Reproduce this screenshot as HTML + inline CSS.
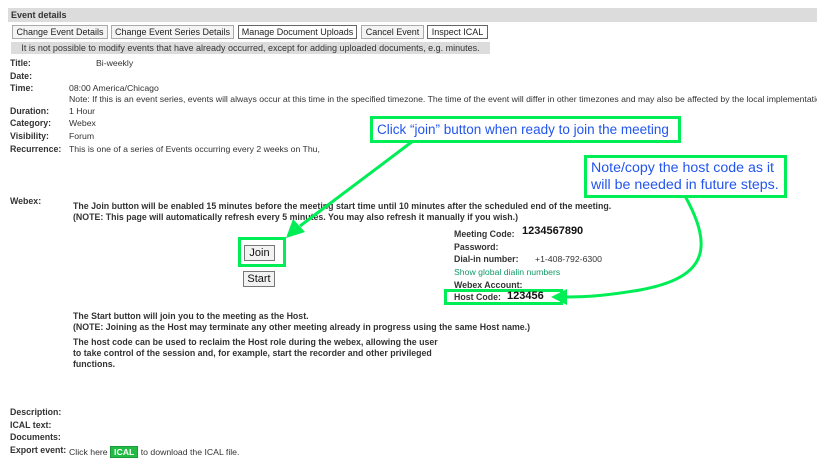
<!DOCTYPE html>
<html><head><meta charset="utf-8">
<style>
*{margin:0;padding:0;box-sizing:border-box}
body{width:817px;height:464px;overflow:hidden;background:#fff;font-family:"Liberation Sans",Arial,sans-serif;font-size:8.7px;color:#333;position:relative}
.a{position:absolute;white-space:nowrap;line-height:11px}
.b{font-weight:bold;color:#333;font-size:8.8px}
.btn{position:absolute;top:25px;height:14px;border:1px solid #aaa;background:#f4f4f4;font-size:9px;line-height:12px;text-align:center;color:#222}
.btn.d{border-color:#666;background:#fff}
.gb{position:absolute;border:3px solid #00ee55}
.co{position:absolute;border:3px solid #00ee55;background:#fff;color:#2255ee;font-size:13.5px;line-height:17px;padding:2px 4px;white-space:nowrap}
.pb{position:absolute;border:1px solid #777;background:#f2f2f2;font-size:11px;line-height:14px;text-align:center;color:#111}
</style></head><body>
<div class="a b" style="left:8px;top:8px;width:809px;height:14px;background:#dcdcdc;padding-left:3px;line-height:14px;font-size:9px">Event details</div>
<div class="btn" style="left:12px;width:96px">Change Event Details</div>
<div class="btn" style="left:111px;width:123px">Change Event Series Details</div>
<div class="btn d" style="left:238px;width:119px">Manage Document Uploads</div>
<div class="btn" style="left:361px;width:63px">Cancel Event</div>
<div class="btn d" style="left:427px;width:61px">Inspect ICAL</div>
<div class="a" style="left:11px;top:42px;width:479px;height:12px;background:#dcdcdc;text-align:center;line-height:12px;font-size:9px">It is not possible to modify events that have already occurred, except for adding uploaded documents, e.g. minutes.</div>

<div class="a b" style="left:10px;top:58px">Title:</div><div class="a" style="left:96px;top:58px">Bi-weekly</div>
<div class="a b" style="left:10px;top:71px">Date:</div>
<div class="a b" style="left:10px;top:83px">Time:</div><div class="a" style="left:69px;top:83px">08:00 America/Chicago</div>
<div class="a" style="left:69px;top:94px">Note: If this is an event series, events will always occur at this time in the specified timezone. The time of the event will differ in other timezones and may also be affected by the local implementation</div>
<div class="a b" style="left:10px;top:106px">Duration:</div><div class="a" style="left:69px;top:106px">1 Hour</div>
<div class="a b" style="left:10px;top:118px">Category:</div><div class="a" style="left:69px;top:118px">Webex</div>
<div class="a b" style="left:10px;top:131px">Visibility:</div><div class="a" style="left:69px;top:131px">Forum</div>
<div class="a b" style="left:10px;top:144px">Recurrence:</div><div class="a" style="left:69px;top:144px">This is one of a series of Events occurring every 2 weeks on Thu,</div>

<div class="a b" style="left:10px;top:196px">Webex:</div>
<div class="a b" style="left:73px;top:201px">The Join button will be enabled 15 minutes before the meeting start time until 10 minutes after the scheduled end of the meeting.</div>
<div class="a b" style="left:73px;top:212px">(NOTE: This page will automatically refresh every 5 minutes. You may also refresh it manually if you wish.)</div>

<div class="gb" style="left:238px;top:237px;width:48px;height:30px"></div>
<div class="pb" style="left:244px;top:245px;width:31px;height:16px">Join</div>
<div class="pb" style="left:243px;top:271px;width:32px;height:16px">Start</div>

<div class="a b" style="left:454px;top:229px">Meeting Code:</div><div class="a b" style="left:522px;top:226px;font-size:11px;color:#111">1234567890</div>
<div class="a b" style="left:454px;top:242px">Password:</div>
<div class="a b" style="left:454px;top:254px">Dial-in number:</div><div class="a" style="left:535px;top:254px">+1-408-792-6300</div>
<div class="a" style="left:454px;top:267px;color:#119966">Show global dialin numbers</div>
<div class="a b" style="left:454px;top:280px">Webex Account:</div>
<div class="gb" style="left:444px;top:289px;width:119px;height:16px"></div>
<div class="a b" style="left:454px;top:292px">Host Code:</div><div class="a b" style="left:507px;top:291px;font-size:11px;color:#111">123456</div>

<div class="a b" style="left:73px;top:311px">The Start button will join you to the meeting as the Host.</div>
<div class="a b" style="left:73px;top:322px">(NOTE: Joining as the Host may terminate any other meeting already in progress using the same Host name.)</div>
<div class="a b" style="left:73px;top:337px">The host code can be used to reclaim the Host role during the webex, allowing the user</div>
<div class="a b" style="left:73px;top:348px">to take control of the session and, for example, start the recorder and other privileged</div>
<div class="a b" style="left:73px;top:359px">functions.</div>

<div class="a b" style="left:10px;top:407px">Description:</div>
<div class="a b" style="left:10px;top:420px">ICAL text:</div>
<div class="a b" style="left:10px;top:432px">Documents:</div>
<div class="a b" style="left:10px;top:445px">Export event:</div>
<div class="a" style="left:69px;top:447px">Click here <span style="background:#22bb44;color:#fff;font-weight:bold;padding:0 3px;border:1px solid #1a9a3a">ICAL</span> to download the ICAL file.</div>

<svg style="position:absolute;left:0;top:0" width="817" height="464">
<line x1="413" y1="141" x2="300" y2="226" stroke="#00ee55" stroke-width="3"/>
<polygon points="286,238 293,219 305,232" fill="#00ee55"/>
<path d="M685,196 C715,250 705,278 640,290 C610,295 590,297 565,297" fill="none" stroke="#00ee55" stroke-width="3"/>
<polygon points="551,297 567,289 567,305" fill="#00ee55"/>
</svg>
<div class="co" style="left:370px;top:116px;width:311px;height:27px">Click “join” button when ready to join the meeting</div>
<div class="co" style="left:584px;top:155px;width:203px;height:43px;font-size:14.2px">Note/copy the host code as it<br>will be needed in future steps.</div>
</body></html>
